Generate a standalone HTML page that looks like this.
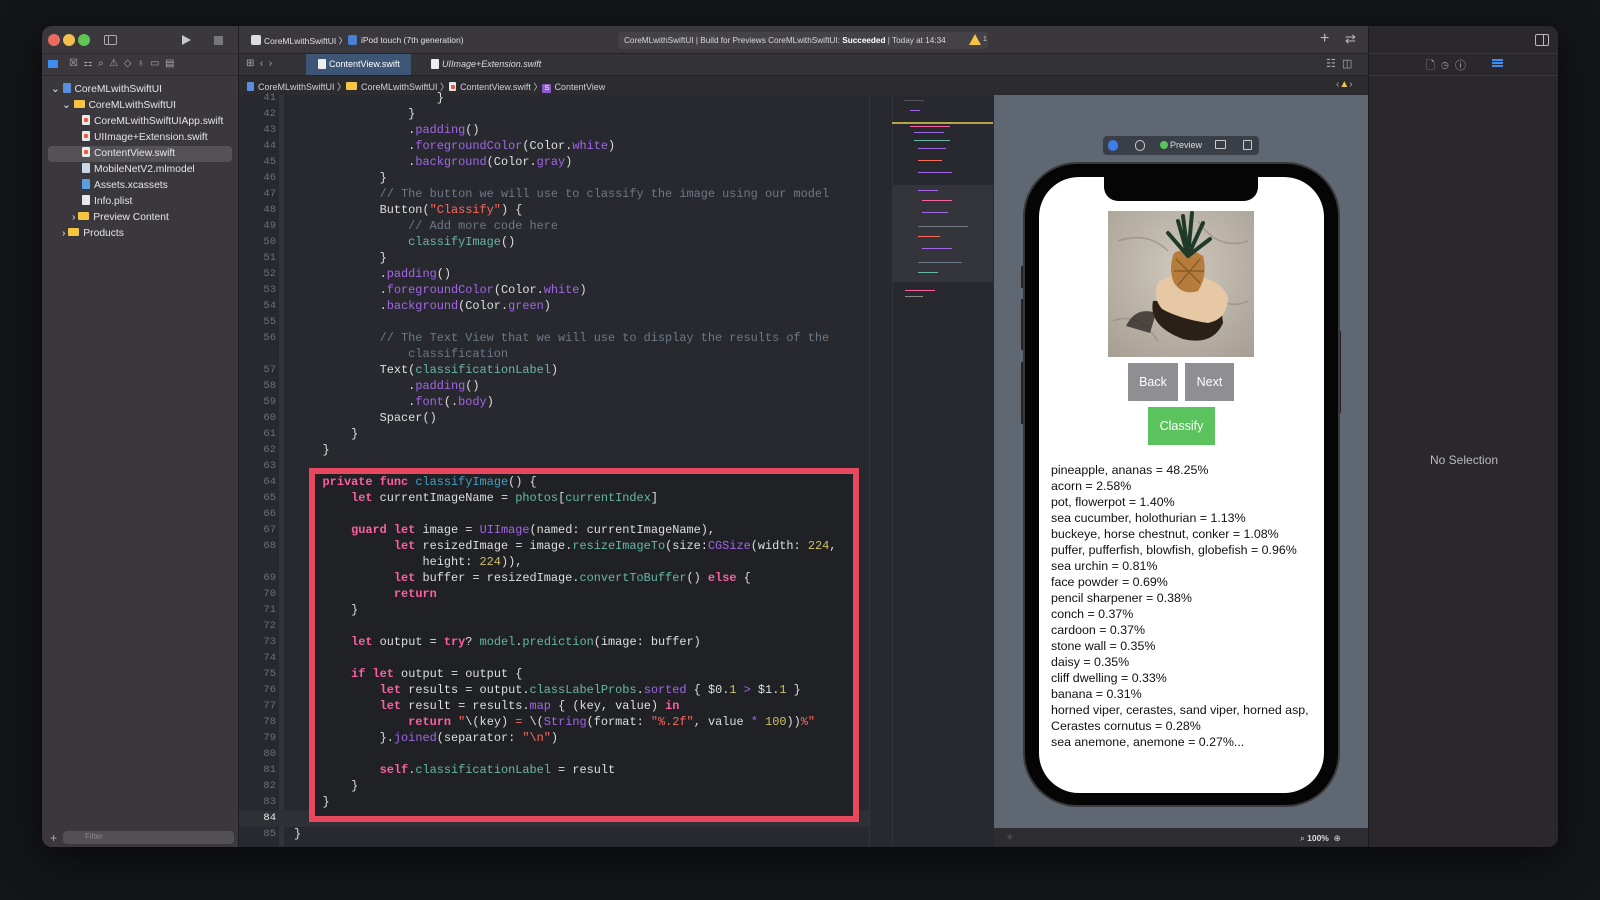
<!DOCTYPE html>
<html><head><meta charset="utf-8">
<style>
*{margin:0;padding:0;box-sizing:border-box}
body{width:1600px;height:900px;background:#141518;position:relative;overflow:hidden;font-family:"Liberation Sans",sans-serif;color:#dcdcdc}
.a{position:absolute}
.win{left:42px;top:26px;width:1516px;height:821px;border-radius:10px;overflow:hidden;background:#2a292d;box-shadow:0 10px 40px rgba(0,0,0,.6)}
.t9{font-size:9px;white-space:nowrap}
.code{font-family:"Liberation Mono",monospace;font-size:11.9px;white-space:pre;color:#dfdfe0}
.row{position:absolute;left:294px;height:16px;line-height:16px}
.ln{position:absolute;width:34px;left:242px;text-align:right;font-family:"Liberation Mono",monospace;font-size:10.5px;color:#6f7076;line-height:16px;height:16px}
.k{color:#fc5fa3;font-weight:bold}.c{color:#6c7986}.s{color:#fc6a5d}.n{color:#d0bf69}.p{color:#a167e6}.t{color:#67b7a4}.d{color:#41a1c0}
.tree{position:absolute;font-size:10.3px;color:#e6e6e6;white-space:nowrap;line-height:14px}
.fi{display:inline-block;width:8px;height:10px;background:#e9e9e9;border-radius:1px;vertical-align:-1px;margin-right:4px;position:relative}
.fi.sw::after{content:"";position:absolute;left:2px;top:3px;width:4px;height:4px;background:#f0593f;border-radius:1px}
.fo{display:inline-block;width:11px;height:8px;background:#f5c443;border-radius:1px;vertical-align:0;margin-right:4px}
.res{position:absolute;left:1051px;font-size:12.4px;color:#111;white-space:nowrap;line-height:16px}
.mm{position:absolute;height:1px}
</style></head><body>
<div class="a win">
 <div class="a" style="left:0;top:0;width:197px;height:821px;background:#3a383c"></div>
 <div class="a" style="left:197px;top:0;width:1129px;height:27px;background:#3a383d"></div>
 <div class="a" style="left:197px;top:27px;width:1129px;height:22px;background:#333236;border-top:1px solid #252427"></div>
 <div class="a" style="left:197px;top:49px;width:1129px;height:20px;background:#2c2b2f;border-top:1px solid #222"></div>
 <div class="a" style="left:1326px;top:0;width:190px;height:821px;background:#2a282c;border-left:1px solid #1c1b1e"></div>
 <div class="a" style="left:1326px;top:27px;width:190px;height:1px;background:#3a383c"></div>
 <div class="a" style="left:1326px;top:49px;width:190px;height:1px;background:#3a383c"></div>
 <div class="a" style="left:196px;top:0;width:1px;height:821px;background:#1e1d20"></div>
 <div class="a" style="left:0;top:27px;width:197px;height:1px;background:#2c2b2e"></div>
 <div class="a" style="left:0;top:49px;width:197px;height:1px;background:#2c2b2e"></div>
</div>

<div class="a" style="left:48px;top:34px;width:12px;height:12px;border-radius:6px;background:#ed6a5e"></div>
<div class="a" style="left:63px;top:34px;width:12px;height:12px;border-radius:6px;background:#f5bf4f"></div>
<div class="a" style="left:78px;top:34px;width:12px;height:12px;border-radius:6px;background:#61c554"></div>
<div class="a" style="left:104px;top:35px;width:13px;height:10px;border:1.2px solid #aaa;border-radius:2px"></div>
<div class="a" style="left:108px;top:35px;width:1.2px;height:10px;background:#aaa"></div>
<svg class="a" style="left:180px;top:34px" width="12" height="12"><path d="M2 1 L11 6 L2 11Z" fill="#c8c8c8"/></svg>
<div class="a" style="left:214px;top:36px;width:9px;height:9px;background:#777"></div>

<div class="a" style="left:251px;top:35px;width:10px;height:10px;border-radius:2px;background:#ddd"></div>
<div class="a t9" style="left:264px;top:35px;color:#e0e0e0;font-size:8.5px">CoreMLwithSwiftUI 〉</div>
<div class="a" style="left:348px;top:35px;width:9px;height:10px;border-radius:2px;background:#4a7fd6"></div>
<div class="a t9" style="left:361px;top:35px;color:#e0e0e0;font-size:8.5px">iPod touch (7th generation)</div>
<div class="a" style="left:618px;top:32px;width:370px;height:17px;border-radius:4px;background:#444246"></div>
<div class="a t9" style="left:624px;top:36px;color:#d8d8d8;font-size:8.2px">CoreMLwithSwiftUI | Build for Previews CoreMLwithSwiftUI: <b style="color:#fff">Succeeded</b> | Today at 14:34</div>
<svg class="a" style="left:969px;top:34px" width="12" height="11"><path d="M6 0 L12 11 L0 11Z" fill="#f5c443"/></svg>
<div class="a t9" style="left:983px;top:36px;font-size:7px;color:#ccc">1</div>
<div class="a" style="left:1320px;top:30px;font-size:16px;color:#bbb">+</div>
<div class="a" style="left:1345px;top:31px;font-size:13px;color:#bbb">⇄</div>
<div class="a" style="left:1535px;top:34px;width:14px;height:12px;border:1.2px solid #bbb;border-radius:2px"></div>
<div class="a" style="left:1543px;top:34px;width:1.2px;height:12px;background:#bbb"></div>

<div class="a" style="left:48px;top:60px;width:10px;height:8px;background:#3d8ef0;border-radius:1px"></div>
<div class="a t9" style="left:69px;top:58px;color:#aaa;font-size:10px">☒ &nbsp;⚏ &nbsp;⌕ &nbsp;⚠ &nbsp;◇ &nbsp;♁ &nbsp;▭ &nbsp;▤</div>
<div class="a t9" style="left:246px;top:58px;color:#aaa;font-size:10px">⊞ &nbsp;‹ &nbsp;›</div>
<div class="a" style="left:306px;top:54px;width:105px;height:21px;background:#3e5675"></div>
<div class="a" style="left:318px;top:59px;width:8px;height:10px;background:#eee;border-radius:1px"></div>
<div class="a t9" style="left:329px;top:59px;color:#fff">ContentView.swift</div>
<div class="a" style="left:431px;top:59px;width:8px;height:10px;background:#eee;border-radius:1px"></div>
<div class="a t9" style="left:442px;top:59px;color:#ddd;font-style:italic">UIImage+Extension.swift</div>
<div class="a t9" style="left:1326px;top:57px;color:#aaa;font-size:11px">☷ &nbsp;◫</div>
<div class="a t9" style="left:1426px;top:57px;color:#aaa;font-size:11px">🗋 &nbsp;◷ &nbsp;ⓘ</div>
<div class="a" style="left:1492px;top:59px;width:11px;height:2px;background:#3d8ef0;box-shadow:0 3px 0 #3d8ef0,0 6px 0 #3d8ef0"></div>

<div class="a t9" style="left:247px;top:80px;color:#d0d0d0"><span class="fi" style="background:#5a8de0;width:7px;height:9px"></span>CoreMLwithSwiftUI 〉<span class="fo"></span>CoreMLwithSwiftUI 〉<span class="fi sw" style="width:7px;height:9px"></span>ContentView.swift 〉<span style="display:inline-block;width:9px;height:9px;background:#8a5cc9;border-radius:1px;margin-right:3px;font-size:7px;text-align:center;line-height:9px;color:#fff">S</span>ContentView</div>
<div class="a t9" style="left:1336px;top:79px;color:#aaa;font-size:10px">‹<span style="color:#f5c443">▲</span>›</div>

<div class="tree" style="left:51px;top:83px">⌄&nbsp;<span class="fi" style="background:#5a8de0"></span>CoreMLwithSwiftUI</div>
<div class="tree" style="left:62px;top:99px">⌄&nbsp;<span class="fo"></span>CoreMLwithSwiftUI</div>
<div class="tree" style="left:82px;top:115px"><span class="fi sw"></span>CoreMLwithSwiftUIApp.swift</div>
<div class="tree" style="left:82px;top:131px"><span class="fi sw"></span>UIImage+Extension.swift</div>
<div class="a" style="left:48px;top:146px;width:184px;height:16px;background:#545256;border-radius:4px"></div>
<div class="tree" style="left:82px;top:147px"><span class="fi sw"></span>ContentView.swift</div>
<div class="tree" style="left:82px;top:163px"><span class="fi" style="background:#c8d8e8"></span>MobileNetV2.mlmodel</div>
<div class="tree" style="left:82px;top:179px"><span class="fi" style="background:#5aa0e0"></span>Assets.xcassets</div>
<div class="tree" style="left:82px;top:195px"><span class="fi"></span>Info.plist</div>
<div class="tree" style="left:72px;top:211px">›&nbsp;<span class="fo"></span>Preview Content</div>
<div class="tree" style="left:62px;top:227px">›&nbsp;<span class="fo"></span>Products</div>
<div class="a" style="left:50px;top:831px;font-size:12px;color:#aaa">+</div>
<div class="a" style="left:63px;top:831px;width:171px;height:13px;background:#525054;border-radius:4px"></div>
<div class="a t9" style="left:85px;top:832px;color:#888;font-size:8px">Filter</div>

<div class="a" style="left:239px;top:95px;width:630px;height:751px;background:#28292e"></div>
<div class="a" style="left:869px;top:95px;width:23px;height:751px;background:#28292e;border-left:1px solid #333438"></div>
<div class="a" style="left:279px;top:95px;width:5px;height:751px;background:#333439"></div>
<div class="a" style="left:239px;top:811px;width:630px;height:16px;background:#2f3036"></div>
<div class="a" style="left:309px;top:468px;width:550px;height:354px;border:6px solid #e8485e;background:#202125"></div>

<div class="code">
<div class="ln" style="top:90px">41</div><div class="row" style="top:90px">                    }</div>
<div class="ln" style="top:106px">42</div><div class="row" style="top:106px">                }</div>
<div class="ln" style="top:122px">43</div><div class="row" style="top:122px">                .<span class="p">padding</span>()</div>
<div class="ln" style="top:138px">44</div><div class="row" style="top:138px">                .<span class="p">foregroundColor</span>(Color.<span class="p">white</span>)</div>
<div class="ln" style="top:154px">45</div><div class="row" style="top:154px">                .<span class="p">background</span>(Color.<span class="p">gray</span>)</div>
<div class="ln" style="top:170px">46</div><div class="row" style="top:170px">            }</div>
<div class="ln" style="top:186px">47</div><div class="row c" style="top:186px">            // The button we will use to classify the image using our model</div>
<div class="ln" style="top:202px">48</div><div class="row" style="top:202px">            Button(<span class="s">"Classify"</span>) {</div>
<div class="ln" style="top:218px">49</div><div class="row c" style="top:218px">                // Add more code here</div>
<div class="ln" style="top:234px">50</div><div class="row" style="top:234px">                <span class="t">classifyImage</span>()</div>
<div class="ln" style="top:250px">51</div><div class="row" style="top:250px">            }</div>
<div class="ln" style="top:266px">52</div><div class="row" style="top:266px">            .<span class="p">padding</span>()</div>
<div class="ln" style="top:282px">53</div><div class="row" style="top:282px">            .<span class="p">foregroundColor</span>(Color.<span class="p">white</span>)</div>
<div class="ln" style="top:298px">54</div><div class="row" style="top:298px">            .<span class="p">background</span>(Color.<span class="p">green</span>)</div>
<div class="ln" style="top:314px">55</div>
<div class="ln" style="top:330px">56</div><div class="row c" style="top:330px">            // The Text View that we will use to display the results of the</div>
<div class="row c" style="top:346px">                classification</div>
<div class="ln" style="top:362px">57</div><div class="row" style="top:362px">            Text(<span class="t">classificationLabel</span>)</div>
<div class="ln" style="top:378px">58</div><div class="row" style="top:378px">                .<span class="p">padding</span>()</div>
<div class="ln" style="top:394px">59</div><div class="row" style="top:394px">                .<span class="p">font</span>(.<span class="p">body</span>)</div>
<div class="ln" style="top:410px">60</div><div class="row" style="top:410px">            Spacer()</div>
<div class="ln" style="top:426px">61</div><div class="row" style="top:426px">        }</div>
<div class="ln" style="top:442px">62</div><div class="row" style="top:442px">    }</div>
<div class="ln" style="top:458px">63</div>
<div class="ln" style="top:474px">64</div><div class="row" style="top:474px">    <span class="k">private func</span> <span class="d">classifyImage</span>() {</div>
<div class="ln" style="top:490px">65</div><div class="row" style="top:490px">        <span class="k">let</span> currentImageName = <span class="t">photos</span>[<span class="t">currentIndex</span>]</div>
<div class="ln" style="top:506px">66</div>
<div class="ln" style="top:522px">67</div><div class="row" style="top:522px">        <span class="k">guard let</span> image = <span class="p">UIImage</span>(named: currentImageName),</div>
<div class="ln" style="top:538px">68</div><div class="row" style="top:538px">              <span class="k">let</span> resizedImage = image.<span class="t">resizeImageTo</span>(size:<span class="p">CGSize</span>(width: <span class="n">224</span>,</div>
<div class="row" style="top:554px">                  height: <span class="n">224</span>)),</div>
<div class="ln" style="top:570px">69</div><div class="row" style="top:570px">              <span class="k">let</span> buffer = resizedImage.<span class="t">convertToBuffer</span>() <span class="k">else</span> {</div>
<div class="ln" style="top:586px">70</div><div class="row" style="top:586px">              <span class="k">return</span></div>
<div class="ln" style="top:602px">71</div><div class="row" style="top:602px">        }</div>
<div class="ln" style="top:618px">72</div>
<div class="ln" style="top:634px">73</div><div class="row" style="top:634px">        <span class="k">let</span> output = <span class="k">try</span>? <span class="t">model</span>.<span class="t">prediction</span>(image: buffer)</div>
<div class="ln" style="top:650px">74</div>
<div class="ln" style="top:666px">75</div><div class="row" style="top:666px">        <span class="k">if let</span> output = output {</div>
<div class="ln" style="top:682px">76</div><div class="row" style="top:682px">            <span class="k">let</span> results = output.<span class="t">classLabelProbs</span>.<span class="p">sorted</span> { $0.<span class="n">1</span> <span class="p">&gt;</span> $1.<span class="n">1</span> }</div>
<div class="ln" style="top:698px">77</div><div class="row" style="top:698px">            <span class="k">let</span> result = results.<span class="p">map</span> { (key, value) <span class="k">in</span></div>
<div class="ln" style="top:714px">78</div><div class="row" style="top:714px">                <span class="k">return</span> <span class="s">"</span>\(key) <span class="s">=</span> \(<span class="p">String</span>(format: <span class="s">"%.2f"</span>, value <span class="p">*</span> <span class="n">100</span>))<span class="s">%"</span></div>
<div class="ln" style="top:730px">79</div><div class="row" style="top:730px">            }.<span class="p">joined</span>(separator: <span class="s">"\n"</span>)</div>
<div class="ln" style="top:746px">80</div>
<div class="ln" style="top:762px">81</div><div class="row" style="top:762px">            <span class="k">self</span>.<span class="t">classificationLabel</span> = result</div>
<div class="ln" style="top:778px">82</div><div class="row" style="top:778px">        }</div>
<div class="ln" style="top:794px">83</div><div class="row" style="top:794px">    }</div>
<div class="ln" style="top:810px;color:#eee">84</div>
<div class="ln" style="top:826px">85</div><div class="row" style="top:826px">}</div>
</div>

<div class="a" style="left:892px;top:95px;width:101px;height:751px;background:#28292e;border-left:1px solid #333438"></div>
<div class="a" style="left:892px;top:185px;width:101px;height:97px;background:#34353b"></div>
<div class="a" style="left:892px;top:122px;width:101px;height:2px;background:#b8a54a"></div>
<div class="mm" style="left:904px;top:100px;width:20px;background:#555"></div>
<div class="mm" style="left:910px;top:110px;width:10px;background:#a167e6"></div>
<div class="mm" style="left:910px;top:126px;width:40px;background:#fc5fa3"></div>
<div class="mm" style="left:914px;top:132px;width:30px;background:#a167e6"></div>
<div class="mm" style="left:914px;top:140px;width:36px;background:#67b7a4"></div>
<div class="mm" style="left:918px;top:148px;width:28px;background:#a167e6"></div>
<div class="mm" style="left:918px;top:160px;width:24px;background:#fc6a5d"></div>
<div class="mm" style="left:918px;top:172px;width:34px;background:#a167e6"></div>
<div class="mm" style="left:918px;top:190px;width:20px;background:#a167e6"></div>
<div class="mm" style="left:922px;top:200px;width:30px;background:#fc5fa3"></div>
<div class="mm" style="left:922px;top:212px;width:26px;background:#a167e6"></div>
<div class="mm" style="left:918px;top:226px;width:50px;background:#6c7986"></div>
<div class="mm" style="left:918px;top:236px;width:22px;background:#fc6a5d"></div>
<div class="mm" style="left:922px;top:248px;width:30px;background:#a167e6"></div>
<div class="mm" style="left:918px;top:262px;width:44px;background:#6c7986"></div>
<div class="mm" style="left:918px;top:272px;width:20px;background:#67b7a4"></div>
<div class="mm" style="left:905px;top:290px;width:30px;background:#fc5fa3"></div>
<div class="mm" style="left:905px;top:296px;width:18px;background:#888"></div>

<div class="a" style="left:994px;top:95px;width:374px;height:733px;background:#5e6772"></div>
<div class="a" style="left:994px;top:828px;width:374px;height:18px;background:#2d2c30"></div>
<div class="a t9" style="left:1006px;top:832px;color:#777">✧</div>
<div class="a t9" style="left:1300px;top:833px;color:#ddd;font-size:8.5px">⌕ <b>100%</b> &nbsp;⊕</div>
<div class="a" style="left:1103px;top:136px;width:156px;height:19px;background:#3a3e46;border-radius:4px"></div>
<div class="a" style="left:1108px;top:140px;width:10px;height:11px;border-radius:5px;background:#3f7ee8"></div>
<div class="a" style="left:1135px;top:140px;width:10px;height:11px;border-radius:5px;border:1.2px solid #ccc"></div>
<div class="a" style="left:1160px;top:141px;width:8px;height:8px;border-radius:4px;background:#5ac35e"></div>
<div class="a t9" style="left:1170px;top:140px;color:#ddd">Preview</div>
<div class="a" style="left:1215px;top:140px;width:11px;height:9px;border:1.2px solid #ccc;border-radius:1px"></div>
<div class="a" style="left:1243px;top:140px;width:9px;height:10px;border:1.2px solid #ccc;border-radius:1px"></div>

<div class="a" style="left:1021px;top:266px;width:4px;height:22px;background:#222;border-radius:1px"></div>
<div class="a" style="left:1021px;top:299px;width:4px;height:51px;background:#222;border-radius:1px"></div>
<div class="a" style="left:1021px;top:362px;width:4px;height:62px;background:#222;border-radius:1px"></div>
<div class="a" style="left:1337px;top:331px;width:4px;height:82px;background:#222;border-radius:1px"></div>
<div class="a" style="left:1025px;top:164px;width:313px;height:641px;border-radius:52px;background:#050505;box-shadow:0 0 0 2px #3a3a3c"></div>
<div class="a" style="left:1039px;top:177px;width:285px;height:616px;border-radius:40px;background:#fff"></div>
<div class="a" style="left:1104px;top:174px;width:154px;height:27px;border-radius:0 0 14px 14px;background:#050505"></div>

<svg class="a" style="left:1108px;top:211px" width="146" height="146" viewBox="0 0 146 146">
<defs><radialGradient id="g" cx="0.5" cy="0.4" r="0.8"><stop offset="0" stop-color="#cfc8bd"/><stop offset="1" stop-color="#a59d92"/></radialGradient></defs>
<rect width="146" height="146" fill="url(#g)"/>
<path d="M10 30 Q40 20 60 40 M90 10 Q110 40 140 30 M100 80 Q120 100 140 90 M5 110 Q30 100 50 130" stroke="#8d857b" stroke-width="1.5" fill="none" opacity=".6"/>
<path d="M45 90 Q40 115 75 128 Q105 135 115 112 L112 88 Z" fill="#2a2018"/>
<path d="M50 72 Q60 62 82 64 Q112 67 120 86 Q120 108 100 112 Q72 108 54 98 Q44 86 50 72Z" fill="#e6c9a4"/>
<path d="M18 115 Q28 95 48 102 L42 122Z" fill="#2f2a25" opacity=".8"/>
<path d="M66 42 Q80 35 95 45 Q100 65 90 80 Q75 85 66 72 Q60 58 66 42Z" fill="#b57c3c"/>
<path d="M68 48 L92 72 M92 48 L70 74 M66 60 L96 60" stroke="#6b4420" stroke-width="1.2" opacity=".7"/>
<path d="M80 45 L70 10 M80 45 L84 2 M80 45 L95 12 M80 45 L60 22 M80 45 L102 28 M80 45 L75 5" stroke="#1f3a28" stroke-width="4" stroke-linecap="round"/>
</svg>
<div class="a" style="left:1128px;top:363px;width:50px;height:38px;background:#8e8e93;color:#fff;font-size:12.5px;text-align:center;line-height:38px">Back</div>
<div class="a" style="left:1185px;top:363px;width:49px;height:38px;background:#8e8e93;color:#fff;font-size:12.5px;text-align:center;line-height:38px">Next</div>
<div class="a" style="left:1148px;top:407px;width:67px;height:38px;background:#5ac35e;color:#fff;font-size:12.5px;text-align:center;line-height:38px">Classify</div>

<div class="res" style="top:462px">pineapple, ananas = 48.25%</div>
<div class="res" style="top:478px">acorn = 2.58%</div>
<div class="res" style="top:494px">pot, flowerpot = 1.40%</div>
<div class="res" style="top:510px">sea cucumber, holothurian = 1.13%</div>
<div class="res" style="top:526px">buckeye, horse chestnut, conker = 1.08%</div>
<div class="res" style="top:542px">puffer, pufferfish, blowfish, globefish = 0.96%</div>
<div class="res" style="top:558px">sea urchin = 0.81%</div>
<div class="res" style="top:574px">face powder = 0.69%</div>
<div class="res" style="top:590px">pencil sharpener = 0.38%</div>
<div class="res" style="top:606px">conch = 0.37%</div>
<div class="res" style="top:622px">cardoon = 0.37%</div>
<div class="res" style="top:638px">stone wall = 0.35%</div>
<div class="res" style="top:654px">daisy = 0.35%</div>
<div class="res" style="top:670px">cliff dwelling = 0.33%</div>
<div class="res" style="top:686px">banana = 0.31%</div>
<div class="res" style="top:702px">horned viper, cerastes, sand viper, horned asp,</div>
<div class="res" style="top:718px">Cerastes cornutus = 0.28%</div>
<div class="res" style="top:734px">sea anemone, anemone = 0.27%...</div>

<div class="a" style="left:1430px;top:453px;font-size:12px;color:#bbb">No Selection</div>
</body></html>
